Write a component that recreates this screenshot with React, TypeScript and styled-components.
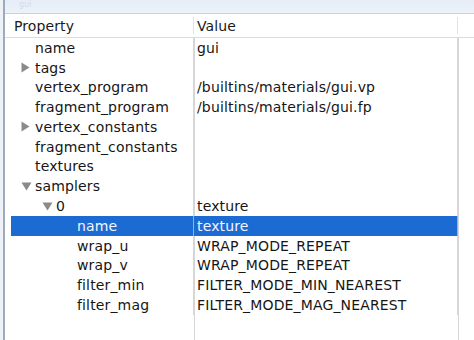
import React from "react";
import styled, { createGlobalStyle } from "styled-components";

const Global = createGlobalStyle`
  html, body { margin: 0; padding: 0; background: #ffffff; }
  body { font-family: "DejaVu Sans", "Liberation Sans", sans-serif; }
`;

type Row = {
  label: string;
  value?: string;
  depth: number;
  arrow?: "right" | "down";
  selected?: boolean;
};

const rows: Row[] = [
  { label: "name", value: "gui", depth: 0 },
  { label: "tags", depth: 0, arrow: "right" },
  { label: "vertex_program", value: "/builtins/materials/gui.vp", depth: 0 },
  { label: "fragment_program", value: "/builtins/materials/gui.fp", depth: 0 },
  { label: "vertex_constants", depth: 0, arrow: "right" },
  { label: "fragment_constants", depth: 0 },
  { label: "textures", depth: 0 },
  { label: "samplers", depth: 0, arrow: "down" },
  { label: "0", value: "texture", depth: 1, arrow: "down" },
  { label: "name", value: "texture", depth: 2, selected: true },
  { label: "wrap_u", value: "WRAP_MODE_REPEAT", depth: 2 },
  { label: "wrap_v", value: "WRAP_MODE_REPEAT", depth: 2 },
  { label: "filter_min", value: "FILTER_MODE_MIN_NEAREST", depth: 2 },
  { label: "filter_mag", value: "FILTER_MODE_MAG_NEAREST", depth: 2 },
];

const Frame = styled.div`
  width: 474px;
  height: 340px;
  display: flex;
  overflow: hidden;
  background: #ffffff;
`;

const LeftEdge = styled.div`
  width: 3px;
  flex: none;
  background: #eef2f8;
  border-right: 2px solid #9fabbd;
`;

const Content = styled.div`
  flex: 1;
  display: flex;
  flex-direction: column;
  min-width: 0;
`;

const TitleStrip = styled.div`
  height: 13px;
  flex: none;
  background: linear-gradient(#e6edf7, #edf2f9);
  border-bottom: 1px solid #c9d3e0;
  color: #d3dbe6;
  font-size: 8px;
  line-height: 9px;
  padding-left: 14px;
  overflow: hidden;
`;

const Table = styled.div`
  flex: 1;
  display: flex;
  flex-direction: column;
  padding-left: 6px;
`;

const HeaderRow = styled.div`
  display: grid;
  grid-template-columns: 183px 264px 1fr;
  height: 23px;
  border-bottom: 1px solid #dcdcdc;
  margin-left: -6px;
  padding-left: 6px;
`;

const HeaderCell = styled.div<{ $last?: boolean }>`
  display: flex;
  align-items: center;
  padding-left: 3px;
  font-size: 14px;
  letter-spacing: 0.1px;
  color: #1a1a1a;
  border-right: ${(p) => (p.$last ? "none" : "1px solid #e2e2e2")};
  margin: 3px 0;
`;

const Body = styled.div`
  flex: 1;
  display: grid;
  grid-template-columns: 183px 264px 1fr;
  grid-auto-rows: 19.77px;
  align-content: start;
  background:
    linear-gradient(#d6d6d6, #d6d6d6) 183px 0 / 1px 100% no-repeat,
    linear-gradient(#d6d6d6, #d6d6d6) 447px 0 / 1px 100% no-repeat;
`;

const Cell = styled.div<{ $sel?: boolean; $divider?: boolean }>`
  display: flex;
  align-items: center;
  font-size: 14px;
  letter-spacing: 0.15px;
  white-space: nowrap;
  overflow: hidden;
  color: ${(p) => (p.$sel ? "#f2f6ff" : "#161616")};
  background: ${(p) => (p.$sel ? "#1c6bd3" : "transparent")};
  border-right: ${(p) =>
    p.$divider ? (p.$sel ? "1px solid #8db4ea" : "1px solid #d6d6d6") : "none"};
`;

const PropCell = styled(Cell)<{ $depth: number }>`
  padding-left: ${(p) => 24 + p.$depth * 21}px;
  position: relative;
`;

const ValueCell = styled(Cell)`
  padding-left: 3px;
`;

const ArrowBox = styled.span`
  position: absolute;
  top: 0;
  bottom: 0;
  display: flex;
  align-items: center;
`;

const Arrow = ({ dir, depth }: { dir: "right" | "down"; depth: number }) => (
  <ArrowBox style={{ left: 10 + depth * 21 }}>
    {dir === "right" ? (
      <svg width="9" height="11" viewBox="0 0 9 11">
        <path d="M0.5 0.5 L8.5 5.5 L0.5 10.5 Z" fill="#8a8a8a" />
      </svg>
    ) : (
      <svg width="11" height="9" viewBox="0 0 11 9">
        <path d="M0.5 0.5 L10.5 0.5 L5.5 8.5 Z" fill="#8a8a8a" />
      </svg>
    )}
  </ArrowBox>
);

export default function App() {
  return (
    <Frame>
      <Global />
      <LeftEdge />
      <Content>
        <TitleStrip>gui</TitleStrip>
        <Table>
          <HeaderRow>
            <HeaderCell>Property</HeaderCell>
            <HeaderCell>Value</HeaderCell>
            <HeaderCell $last />
          </HeaderRow>
          <Body>
            {rows.map((r, i) => (
              <React.Fragment key={i}>
                <PropCell $depth={r.depth} $sel={r.selected} $divider>
                  {r.arrow && <Arrow dir={r.arrow} depth={r.depth} />}
                  {r.label}
                </PropCell>
                <ValueCell $sel={r.selected} $divider>
                  {r.value ?? ""}
                </ValueCell>
                <Cell />
              </React.Fragment>
            ))}
          </Body>
        </Table>
      </Content>
    </Frame>
  );
}
